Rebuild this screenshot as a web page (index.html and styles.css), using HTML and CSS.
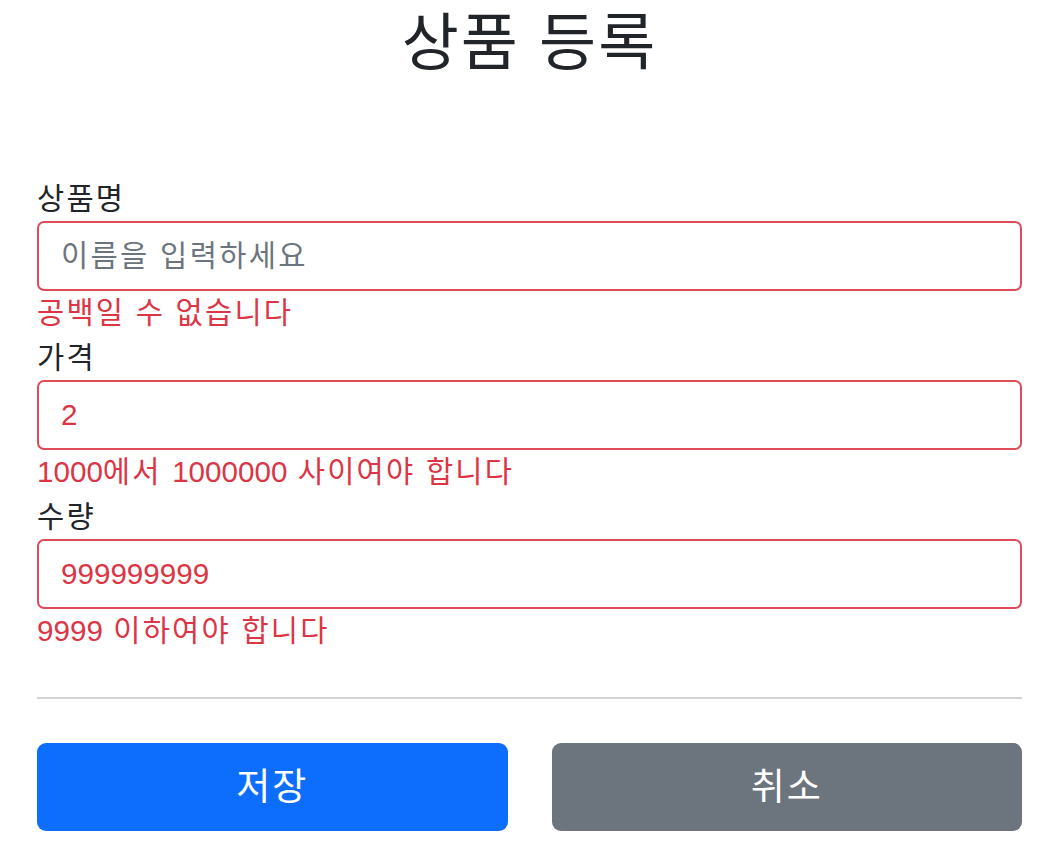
FILE: index.html
```html
<!DOCTYPE html>
<html lang="ko">
<head>
<meta charset="utf-8">
<title>상품 등록</title>
<link rel="stylesheet" href="styles.css">
</head>
<body>
<div class="container">
  <div class="header">
    <h2 class="title">상품 등록</h2>
  </div>
  <form class="form">
    <div class="field">
      <label class="label" for="itemName">상품명</label>
      <input type="text" id="itemName" class="control is-error" placeholder="이름을 입력하세요">
      <div class="field-error">공백일 수 없습니다</div>
    </div>
    <div class="field">
      <label class="label" for="price">가격</label>
      <input type="text" id="price" class="control is-error" value="2">
      <div class="field-error"><span class="num">1000</span>에서 <span class="num">1000000</span> 사이여야 합니다</div>
    </div>
    <div class="field">
      <label class="label" for="quantity">수량</label>
      <input type="text" id="quantity" class="control is-error" value="999999999">
      <div class="field-error"><span class="num">9999</span> 이하여야 합니다</div>
    </div>
    <hr class="divider">
    <div class="actions">
      <button type="submit" class="btn btn-primary">저장</button>
      <button type="button" class="btn btn-secondary">취소</button>
    </div>
  </form>
</div>
</body>
</html>
```

FILE: styles.css
```css
* { box-sizing: border-box; }

html, body {
  margin: 0;
  padding: 0;
  background: #ffffff;
}

body {
  font-family: "Liberation Sans", "Noto Sans CJK KR", sans-serif;
  font-size: 29.6px;
  line-height: 44.4px;
  color: #212529;
  letter-spacing: 2.2px;
}

.num {
  letter-spacing: 0;
}

.container {
  width: 985px;
  margin-left: 37px;
}

.header {
  text-align: center;
  padding: 7px 0 88px 0;
}

.title {
  margin: 0 0 8px 0;
  font-size: 62px;
  line-height: 74px;
  font-weight: 400;
  letter-spacing: 2px;
  color: #212529;
}

.form {
  margin: 0;
}

.field {
  display: flex;
  flex-direction: column;
}

.label {
  display: block;
  height: 44.4px;
}

.control {
  display: block;
  width: 100%;
  height: 70px;
  padding: 11px 22px;
  font-family: inherit;
  font-size: 29.6px;
  line-height: 44px;
  letter-spacing: 0;
  color: #212529;
  background: #ffffff;
  border: 2px solid #ced4da;
  border-radius: 7px;
  outline: none;
}

.control::placeholder {
  color: #6c757d;
  opacity: 1;
  letter-spacing: 2.3px;
}

.control.is-error {
  border-color: #e04b59;
  color: #dc3545;
}

.field-error {
  color: #dc3545;
  height: 44.4px;
}

.divider {
  margin: 44px 0;
  border: 0;
  border-top: 2px solid #d3d4d5;
  height: 0;
}

.actions {
  display: flex;
  gap: 44px;
}

.btn {
  flex: 1 1 0;
  height: 88px;
  border: 0;
  border-radius: 9px;
  font-family: inherit;
  font-size: 37px;
  line-height: 55px;
  letter-spacing: 2px;
  color: #ffffff;
  padding: 0;
  cursor: pointer;
}

.btn-primary { background: #0d6efd; }
.btn-secondary { background: #6c757d; }
```
